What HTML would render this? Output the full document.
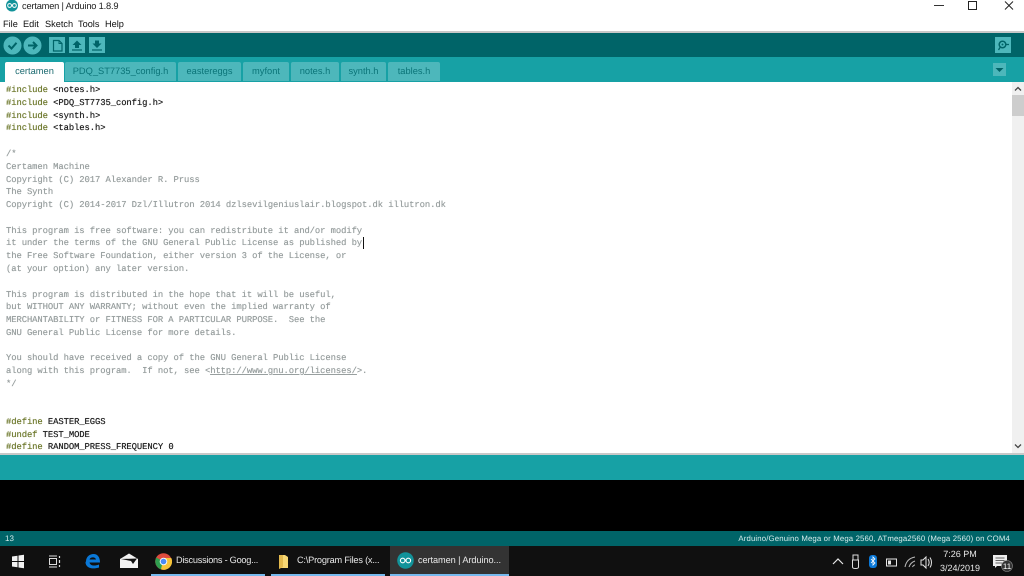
<!DOCTYPE html>
<html><head><meta charset="utf-8">
<style>
html,body{margin:0;padding:0;width:1024px;height:576px;overflow:hidden;background:#fff;font-family:"Liberation Sans",sans-serif;text-rendering:geometricPrecision}
.a{position:absolute;white-space:pre}
.tab{position:absolute;top:62px;height:19px;background:#4db7bb;color:#0b7478;font-size:9.3px;line-height:19px;text-align:center;border-radius:2px 2px 0 0}
.l{position:absolute;left:6px;font-family:"Liberation Mono",monospace;font-size:8.9px;letter-spacing:-.09px;line-height:12px;white-space:pre;color:#222;height:12px;overflow:hidden;text-shadow:0 0 .4px #222}
.c{color:#989f9f;text-shadow:0 0 .4px #989f9f}
.k{color:#6f7a2f;text-shadow:0 0 .4px #6f7a2f}
.tb{position:absolute;top:37px;width:16px;height:16px;background:#4db7bb}
.task{position:absolute;color:#e8e8e8;font-size:9.2px;top:555px;white-space:pre}
.und{position:absolute;top:574px;height:2px;background:#76b9ed}
</style></head><body>
<!-- title bar -->
<svg class="a" style="left:5px;top:0;" width="14" height="12" viewBox="0 0 14 12"><circle cx="7" cy="5.5" r="6" fill="#12939a"/><circle cx="4.6" cy="5.5" r="1.9" fill="none" stroke="#fff" stroke-width="1"/><circle cx="9.4" cy="5.5" r="1.9" fill="none" stroke="#fff" stroke-width="1"/></svg>
<div class="a" style="left:22px;top:0;font-size:9.3px;letter-spacing:-.2px;line-height:13px;color:#222">certamen | Arduino 1.8.9</div>
<div class="a" style="left:3px;top:18px;font-size:9.2px;line-height:13px;color:#111">File</div>
<div class="a" style="left:23px;top:18px;font-size:9.2px;line-height:13px;color:#111">Edit</div>
<div class="a" style="left:45px;top:18px;font-size:9.2px;line-height:13px;color:#111">Sketch</div>
<div class="a" style="left:78px;top:18px;font-size:9.2px;line-height:13px;color:#111">Tools</div>
<div class="a" style="left:105px;top:18px;font-size:9.2px;line-height:13px;color:#111">Help</div>
<svg class="a" style="left:930px;top:0" width="94" height="14" viewBox="0 0 94 14"><path d="M4 5.5H14" stroke="#333" stroke-width="1"/><rect x="38.5" y="1.5" width="8" height="8" fill="none" stroke="#222" stroke-width="1"/><path d="M75 1.5L83 9.5M83 1.5L75 9.5" stroke="#222" stroke-width="1"/></svg>
<!-- toolbar -->
<div class="a" style="left:0;top:31px;width:1024px;height:2px;background:#c8c8c8"></div>
<div class="a" style="left:0;top:33px;width:1024px;height:24px;background:#006468"></div>
<svg class="a" style="left:3px;top:36px" width="40" height="19" viewBox="0 0 40 19"><circle cx="9.5" cy="9.5" r="9" fill="#4db7bb"/><circle cx="29.5" cy="9.5" r="9" fill="#4db7bb"/><path d="M5.5 9.5L8.5 12.5L13.5 6.8" fill="none" stroke="#006468" stroke-width="2"/><path d="M25 9.5H33M30 6L33.5 9.5L30 13" fill="none" stroke="#006468" stroke-width="2"/></svg>
<div class="tb" style="left:49px"></div><div class="tb" style="left:69px"></div><div class="tb" style="left:89px"></div>
<svg class="a" style="left:49px;top:37px" width="57" height="17" viewBox="0 0 57 17"><path d="M4.5 3.5H10L13 6.5V14H4.5Z" fill="none" stroke="#006468" stroke-width="1.2"/><path d="M10 3.5V6.5H13" fill="none" stroke="#006468"/><path d="M28 3.5L32.5 8H30V11H26V8H23.500Z" fill="#006468"/><path d="M23 13H33" stroke="#006468" stroke-width="1.2"/><path d="M48 11L43.500 6.5H46V3.5H50V6.5H52.500Z" fill="#006468"/><path d="M43 13H53" stroke="#006468" stroke-width="1.2"/></svg>
<div class="a" style="left:995px;top:37px;width:16px;height:16px;background:#4db7bb"></div>
<svg class="a" style="left:995px;top:37px" width="16" height="16" viewBox="0 0 16 16"><circle cx="7.5" cy="7.5" r="3.3" fill="none" stroke="#006468" stroke-width="1.5"/><circle cx="7.5" cy="7.5" r="1" fill="#006468"/><path d="M5 10.5L3.5 13M11 7.5H14" stroke="#006468" stroke-width="1.3"/></svg>
<!-- tabs -->
<div class="a" style="left:0;top:57px;width:1024px;height:25px;background:#17a1a5"></div>
<div class="tab" style="left:5px;width:59px;background:#fff;color:#1b6a70;height:20px">certamen</div>
<div class="tab" style="left:65px;width:111px">PDQ_ST7735_config.h</div>
<div class="tab" style="left:178px;width:63px">eastereggs</div>
<div class="tab" style="left:243px;width:46px">myfont</div>
<div class="tab" style="left:291px;width:48px">notes.h</div>
<div class="tab" style="left:341px;width:45px">synth.h</div>
<div class="tab" style="left:388px;width:52px">tables.h</div>
<div class="a" style="left:993px;top:63px;width:13px;height:13px;background:#4db7bb"></div>
<svg class="a" style="left:993px;top:63px" width="13" height="13" viewBox="0 0 13 13"><path d="M2.5 5H10.5L6.5 9Z" fill="#006468"/></svg>
<!-- editor -->
<div class="l" style="top:84px"><span class="k">#include</span> &lt;notes.h&gt;</div>
<div class="l" style="top:97px"><span class="k">#include</span> &lt;PDQ_ST7735_config.h&gt;</div>
<div class="l" style="top:110px"><span class="k">#include</span> &lt;synth.h&gt;</div>
<div class="l" style="top:122px"><span class="k">#include</span> &lt;tables.h&gt;</div>
<div class="l c" style="top:148px">/*</div>
<div class="l c" style="top:161px">Certamen Machine</div>
<div class="l c" style="top:174px">Copyright (C) 2017 Alexander R. Pruss</div>
<div class="l c" style="top:186px">The Synth</div>
<div class="l c" style="top:199px">Copyright (C) 2014-2017 Dzl/Illutron 2014 dzlsevilgeniuslair.blogspot.dk illutron.dk</div>
<div class="l c" style="top:225px">This program is free software: you can redistribute it and/or modify</div>
<div class="l c" style="top:237px">it under the terms of the GNU General Public License as published by</div>
<div class="l c" style="top:250px">the Free Software Foundation, either version 3 of the License, or</div>
<div class="l c" style="top:263px">(at your option) any later version.</div>
<div class="l c" style="top:289px">This program is distributed in the hope that it will be useful,</div>
<div class="l c" style="top:301px">but WITHOUT ANY WARRANTY; without even the implied warranty of</div>
<div class="l c" style="top:314px">MERCHANTABILITY or FITNESS FOR A PARTICULAR PURPOSE.  See the</div>
<div class="l c" style="top:327px">GNU General Public License for more details.</div>
<div class="l c" style="top:352px">You should have received a copy of the GNU General Public License</div>
<div class="l c" style="top:365px">along with this program.  If not, see &lt;<u>http://www.gnu.org/licenses/</u>&gt;.</div>
<div class="l c" style="top:378px">*/</div>
<div class="l" style="top:416px"><span class="k">#define</span> EASTER_EGGS</div>
<div class="l" style="top:429px"><span class="k">#undef</span> TEST_MODE</div>
<div class="l" style="top:441px;height:10px"><span class="k">#define</span> RANDOM_PRESS_FREQUENCY 0</div>
<div class="a" style="left:363px;top:237px;width:1px;height:12px;background:#111"></div>
<!-- scrollbar -->
<div class="a" style="left:1012px;top:82px;width:12px;height:371px;background:#f0f0f0"></div>
<div class="a" style="left:1012px;top:95px;width:12px;height:21px;background:#cdcdcd"></div>
<svg class="a" style="left:1012px;top:84px" width="12" height="10" viewBox="0 0 12 10"><path d="M3 6.5L6 3.5L9 6.5" fill="none" stroke="#444" stroke-width="1.3"/></svg>
<svg class="a" style="left:1012px;top:441px" width="12" height="10" viewBox="0 0 12 10"><path d="M3 3.5L6 6.5L9 3.5" fill="none" stroke="#444" stroke-width="1.3"/></svg>
<!-- status -->
<div class="a" style="left:0;top:453px;width:1024px;height:2px;background:#c8c8c8"></div>
<div class="a" style="left:0;top:455px;width:1024px;height:25px;background:#17a1a5"></div>
<div class="a" style="left:0;top:480px;width:1024px;height:51px;background:#000"></div>
<div class="a" style="left:0;top:531px;width:1024px;height:15px;background:#006468"></div>
<div class="a" style="left:5px;top:534px;font-size:8px;line-height:10px;color:#d5ecec">13</div>
<div class="a" style="right:14px;top:534px;font-size:7.8px;letter-spacing:.14px;line-height:10px;color:#d5ecec">Arduino/Genuino Mega or Mega 2560, ATmega2560 (Mega 2560) on COM4</div>
<!-- taskbar -->
<div class="a" style="left:0;top:546px;width:1024px;height:30px;background:#101010"></div>
<div class="a" style="left:390px;top:546px;width:119px;height:30px;background:#333"></div>
<div class="und" style="left:151px;width:114px"></div>
<div class="und" style="left:271px;width:114px"></div>
<div class="und" style="left:390px;width:119px"></div>
<svg class="a" style="left:0;top:546px" width="150" height="30" viewBox="0 0 150 30"><path d="M12 10.5L17.5 9.7V15H12ZM18.5 9.5L24 8.7V15H18.5ZM12 16H17.5V21.3L12 20.5ZM18.5 16H24V22.3L18.5 21.5Z" fill="#f2f2f2"/><path d="M49 10H57M49 21H57" stroke="#ddd" stroke-width="1"/><rect x="49.5" y="12.5" width="7" height="6" fill="none" stroke="#ddd"/><path d="M59.5 10V12M59.5 14V17M59.5 19V21" stroke="#ddd" stroke-width="1.2"/><path d="M86 15.5C86 10.5 90 8 93.5 8C97.5 8 100 11 100 16.5H89.5C90 19.5 94 20.5 99 18.5V21.5C93 23.5 85.5 22.5 85.5 16ZM89.5 13.5H96C95.5 11 90.5 10.500 89.500 13.500Z" fill="#0a78d7" fill-rule="evenodd"/><path d="M120 13L129 7.500L138 13V22H120Z" fill="#f2f2f2"/><path d="M121 13L137 12.500L133 18L131 15Z" fill="#101010"/></svg>
<svg class="a" style="left:155px;top:553px" width="17" height="17" viewBox="0 0 17 17"><circle cx="8.500" cy="8.500" r="8.300" fill="#dd4b3e"/><path d="M8.500 8.500L1.300 4.500A8.300 8.300 0 0 0 6 16.400Z" fill="#2f9e4f"/><path d="M8.500 5H16.300A8.300 8.300 0 0 1 6 16.400Z" fill="#f6c338"/><circle cx="8.500" cy="8.500" r="3.800" fill="#fff"/><circle cx="8.500" cy="8.500" r="2.900" fill="#4a8af4"/></svg>
<div class="task" style="left:176px;letter-spacing:-.25px">Discussions - Goog...</div>
<svg class="a" style="left:278px;top:554px" width="11" height="16" viewBox="0 0 11 16"><path d="M1 1H7L10 3V14H2L1 15Z" fill="#f7d774"/><path d="M1 1H5V13L1 15Z" fill="#e3b94d"/></svg>
<div class="task" style="left:297px;letter-spacing:-.2px">C:\Program Files (x...</div>
<svg class="a" style="left:397px;top:552px" width="17" height="17" viewBox="0 0 17 17"><circle cx="8.500" cy="8.500" r="8.300" fill="#12939a"/><circle cx="5.700" cy="8.500" r="2.300" fill="none" stroke="#fff" stroke-width="1.100"/><circle cx="11.300" cy="8.500" r="2.300" fill="none" stroke="#fff" stroke-width="1.100"/></svg>
<div class="task" style="left:418px;letter-spacing:-.08px">certamen | Arduino...</div>
<!-- tray -->
<svg class="a" style="left:830px;top:550px" width="110" height="22" viewBox="0 0 110 22"><path d="M3 14L8 9L13 14" fill="none" stroke="#e6e6e6" stroke-width="1.200"/><rect x="23" y="5" width="5" height="5" fill="none" stroke="#ddd"/><path d="M22.500 10H28.500V17C28.500 19 22.500 19 22.500 17Z" fill="none" stroke="#ddd"/><rect x="39" y="5" width="8" height="13" rx="3" fill="#0a78d7"/><path d="M41 9L45 13L43 15V7L45 9L41 13" fill="none" stroke="#fff" stroke-width=".8"/><rect x="56.500" y="9" width="10" height="7" fill="none" stroke="#e6e6e6"/><rect x="58" y="10.500" width="3" height="4" fill="#e6e6e6"/><path d="M75 17C76 12 79 8 85 7M79 17C80 14 82 12 85 11M82.500 17C83 16 84 15 85 15" fill="none" stroke="#bbb" stroke-width="1"/><path d="M91 10H93L96 7V18L93 15H91ZM98 9C99.500 11 99.500 14 98 16M100 7.500C102 10.500 102 14.500 100 17.500" fill="none" stroke="#e6e6e6" stroke-width="1"/></svg>
<div class="a" style="left:938px;top:548px;width:44px;text-align:center;font-size:9px;line-height:13px;color:#e8e8e8">7:26 PM</div>
<div class="a" style="left:938px;top:562px;width:44px;text-align:center;font-size:9px;line-height:13px;color:#e8e8e8">3/24/2019</div>
<svg class="a" style="left:992px;top:552px" width="24" height="20" viewBox="0 0 24 20"><path d="M1 3H15V14H5L3 16V14H1Z" fill="#eee"/><path d="M3.500 6H12.500M3.500 8.500H12.500M3.500 11H10" stroke="#333" stroke-width=".8"/><circle cx="15" cy="14" r="5.500" fill="#333" stroke="#888" stroke-width=".6"/><text x="15" y="17" font-size="8" fill="#fff" text-anchor="middle" font-family="Liberation Sans">11</text></svg>
</body></html>
